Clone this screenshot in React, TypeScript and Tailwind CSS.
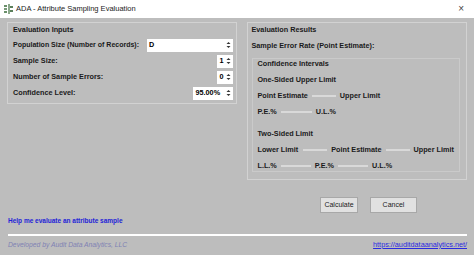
import type { ReactNode } from 'react';

const font = "font-['Liberation_Sans',Arial,sans-serif]";

function Spin() {
  return (
    <svg width="5" height="8" viewBox="0 0 5 8" className="shrink-0">
      <path d="M2.5 1 L4.5 3 L0.5 3 Z" fill="#333" />
      <path d="M2.5 7 L4.5 5 L0.5 5 Z" fill="#333" />
    </svg>
  );
}

function NumInput({ value, width }: { value: string; width: string }) {
  return (
    <div className={`flex h-[13px] items-center justify-between bg-white pl-[2px] pr-[2px] ${width}`}>
      <span className="leading-none text-black">{value}</span>
      <Spin />
    </div>
  );
}

function Line({ w }: { w: string }) {
  return <div className={`h-[2px] bg-[#d9d9d9] ${w}`} />;
}

function Row({ label, children }: { label: string; children: ReactNode }) {
  return (
    <div className="flex h-[16px] items-center justify-between">
      <span>{label}</span>
      {children}
    </div>
  );
}

export default function App() {
  return (
    <div className={`flex h-[255px] w-[474px] flex-col overflow-hidden ${font} text-[7.25px] text-[#1a1a1a]`}>
      {/* title bar */}
      <div className="flex h-[18px] items-center bg-white pl-[4px] pr-[10px]">
        <svg width="9" height="10" viewBox="0 0 9 10" className="mr-[3px]">
          <rect x="0" y="1" width="3" height="2" fill="#6a8f6a" />
          <rect x="0" y="4" width="3" height="2" fill="#7a9a7a" />
          <rect x="0" y="7" width="3" height="2" fill="#6a8f6a" />
          <rect x="4" y="0" width="2" height="10" fill="#8aa88a" />
          <rect x="6" y="2" width="3" height="2" fill="#5b7f5b" />
          <rect x="6" y="6" width="3" height="2" fill="#5b7f5b" />
        </svg>
        <span className="text-[7.5px] text-[#222]">ADA - Attribute Sampling Evaluation</span>
        <span className="ml-auto text-[10px] leading-none text-[#444]">×</span>
      </div>

      {/* body */}
      <div className="flex flex-1 flex-col bg-[#bdbdbd] px-[7px] pt-[4px] font-bold">
        <div className="flex items-start">
          {/* inputs */}
          <div className="h-[82px] w-[231px] border border-[#d2d2d2] pl-[5px] pr-[3px] pt-[2px]">
            <div className="mb-[2px] h-[10px] leading-[10px]">Evaluation Inputs</div>
            <div className="flex h-[16px] items-center">
              <span className="w-[134px] whitespace-nowrap text-[7px]">Population Size (Number of Records):</span>
              <div className="flex h-[13px] flex-1 items-center justify-between bg-white pl-[2px] pr-[2px]">
                <span className="leading-none text-black">D</span>
                <Spin />
              </div>
            </div>
            <Row label="Sample Size:">
              <NumInput value="1" width="w-[16px]" />
            </Row>
            <Row label="Number of Sample Errors:">
              <NumInput value="0" width="w-[16px]" />
            </Row>
            <Row label="Confidence Level:">
              <NumInput value="95.00%" width="w-[40px]" />
            </Row>
          </div>

          {/* results */}
          <div className="ml-[10px] h-[158px] w-[220px] border border-[#d2d2d2] pl-[3px] pr-[6px] pt-[2px]">
            <div className="h-[10px] leading-[10px]">Evaluation Results</div>
            <div className="mt-[6px] h-[10px] leading-[10px]">Sample Error Rate (Point Estimate):</div>
            <div className="ml-[1px] mt-[7px] h-[114px] border border-[#cacaca] pl-[4px]">
              <div className="h-[10px] leading-[10px]">Confidence Intervals</div>
              <div className="mt-[6px] h-[10px] leading-[10px]">One-Sided Upper Limit</div>
              <div className="mt-[6px] flex h-[10px] items-center gap-[4px]">
                <span>Point Estimate</span>
                <Line w="w-[24px]" />
                <span>Upper Limit</span>
              </div>
              <div className="mt-[6px] flex h-[10px] items-center gap-[4px]">
                <span>P.E.%</span>
                <Line w="w-[31px]" />
                <span>U.L.%</span>
              </div>
              <div className="mt-[12px] h-[10px] leading-[10px]">Two-Sided Limit</div>
              <div className="mt-[6px] flex h-[10px] items-center gap-[4px]">
                <span className="mr-[1px]">Lower Limit</span>
                <Line w="w-[24px]" />
                <span>Point Estimate</span>
                <Line w="w-[24px]" />
                <span>Upper Limit</span>
              </div>
              <div className="mt-[6px] flex h-[10px] items-center gap-[4px]">
                <span>L.L.%</span>
                <Line w="w-[30px]" />
                <span>P.E.%</span>
                <Line w="w-[30px]" />
                <span>U.L.%</span>
              </div>
            </div>
          </div>
        </div>

        {/* buttons */}
        <div className="ml-[313px] mt-[17px] flex gap-[12px] font-normal">
          <button className="h-[16px] w-[38px] border border-[#a8a8a8] bg-[#e1e1e1] text-[7px] text-[#222]">
            Calculate
          </button>
          <button className="h-[16px] w-[47px] border border-[#a8a8a8] bg-[#e1e1e1] text-[7px] text-[#222]">
            Cancel
          </button>
        </div>

        <div className="ml-[1px] mt-[3px] h-[10px] text-[6.5px] leading-[10px] text-[#2323d8]">
          Help me evaluate an attribute sample
        </div>

        <div className="ml-[1px] mt-[8px] h-[2px] w-[459px] bg-white" />

        <div className="ml-[1px] mt-[4px] flex h-[10px] w-[459px] items-center justify-between font-normal">
          <span className="text-[6.75px] italic text-[#7f82b4]">Developed by Audit Data Analytics, LLC</span>
          <span className="text-[#2a2ae0] underline">https://auditdataanalytics.net/</span>
        </div>
      </div>
    </div>
  );
}
